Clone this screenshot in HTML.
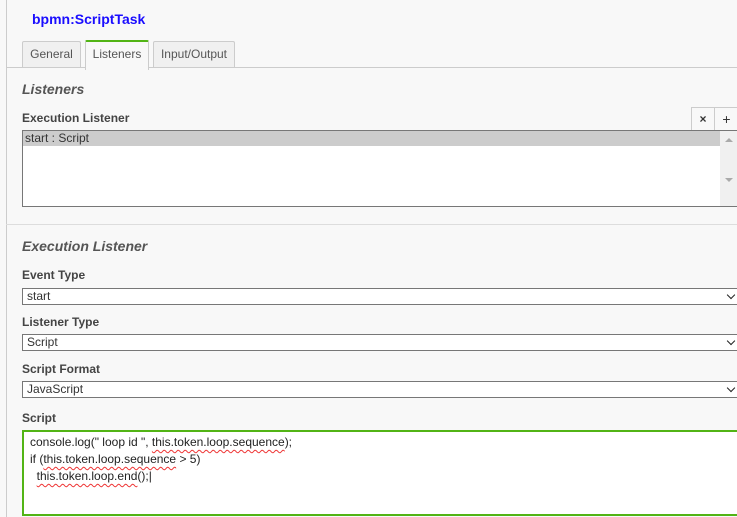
<!DOCTYPE html><html><head><style>
body{margin:0;width:737px;height:517px;background:#f8f8f8;font-family:"Liberation Sans",sans-serif;overflow:hidden;position:relative;color:#333}
.a{position:absolute}
.vl{left:6px;top:0;width:1px;height:517px;background:#ccc}
.lbl{font-size:12px;font-weight:bold;color:#444;left:22px}
.h{font-size:14px;font-weight:bold;font-style:italic;color:#555;left:22px}
.sel{left:22px;width:713px;height:15px;border:1px solid #777;background:#fff;font-size:12px;line-height:15px;padding-left:4px;box-sizing:content-box}
.sel:after{content:"";position:absolute;right:6px;top:3px;width:5px;height:5px;border-right:1.5px solid #222;border-bottom:1.5px solid #222;transform:rotate(45deg)}
.tab{top:41px;height:25px;border:1px solid #ccc;border-bottom:none;font-size:12px;line-height:25px;text-align:center;color:#555;background:#f0f0f0;border-radius:2px 2px 0 0}
.sq{text-decoration:underline wavy #e33;text-decoration-thickness:1px;text-decoration-skip-ink:none;text-underline-offset:3px}
</style></head><body>
<div class="a vl"></div>
<div class="a" style="left:32px;top:11px;font-size:14px;font-weight:bold;color:#1a0dff">bpmn:ScriptTask</div>
<div class="a" style="left:6px;top:67px;width:731px;height:1px;background:#ccc"></div>
<div class="a tab" style="left:22px;width:57px">General</div>
<div class="a tab" style="left:85px;width:62px;top:40px;height:28px;background:#f8f8f8;border-top:2px solid #52b415;line-height:25px">Listeners</div>
<div class="a tab" style="left:153px;width:80px">Input/Output</div>
<div class="a h" style="top:81px">Listeners</div>
<div class="a lbl" style="top:111px">Execution Listener</div>
<div class="a" style="left:691px;top:107px;width:22px;height:22px;border:1px solid #ccc;font-size:12px;font-weight:bold;text-align:center;line-height:22px;color:#333">×</div>
<div class="a" style="left:714px;top:107px;width:23px;height:22px;border:1px solid #ccc;border-right:none;font-size:14px;text-align:center;line-height:22px;color:#333">+</div>
<div class="a" style="left:22px;top:130px;width:714px;height:75px;border:1px solid #777;background:#fff">
<div style="height:15px;background:#ccc;font-size:12px;line-height:15px;padding-left:2px;width:696px">start : Script</div>
<div class="a" style="right:0;top:0;width:17px;height:75px;background:#f0f0f0"><div style="position:absolute;left:5px;top:7px;border:4px solid transparent;border-bottom-color:#aaa;border-top:none"></div><div style="position:absolute;left:5px;top:47px;border:4px solid transparent;border-top-color:#aaa;border-bottom:none"></div></div>
</div>
<div class="a" style="left:6px;top:224px;width:731px;height:1px;background:#ddd"></div>
<div class="a h" style="top:238px">Execution Listener</div>
<div class="a lbl" style="top:268px">Event Type</div>
<div class="a sel" style="top:288px">start</div>
<div class="a lbl" style="top:315px">Listener Type</div>
<div class="a sel" style="top:334px">Script</div>
<div class="a lbl" style="top:362px">Script Format</div>
<div class="a sel" style="top:381px">JavaScript</div>
<div class="a lbl" style="top:411px">Script</div>
<div class="a" style="left:22px;top:430px;width:720px;height:86px;box-sizing:border-box;border:2px solid #52b415;background:#fff;font-size:12px;line-height:17px;padding:2px 0 0 6px;color:#222">console.log(" loop id ", <span class="sq">this.token.loop.sequence</span>);<br>if (<span class="sq">this.token.loop.sequence</span> &gt; 5)<br>&nbsp; <span class="sq">this.token.loop.end</span>();|</div>
</body></html>
